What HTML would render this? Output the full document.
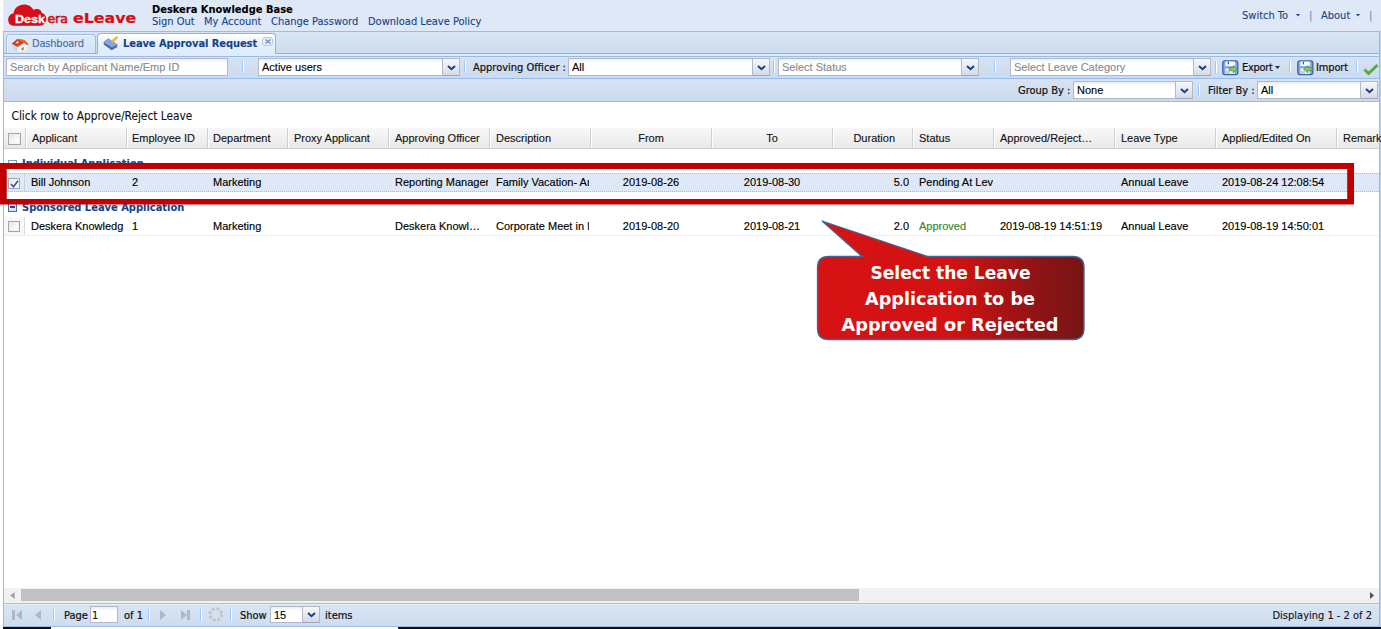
<!DOCTYPE html>
<html>
<head>
<meta charset="utf-8">
<title>Deskera eLeave</title>
<style>
html,body{margin:0;padding:0;}
body{width:1381px;height:629px;overflow:hidden;position:relative;background:#fff;
 font-family:"DejaVu Sans Condensed","DejaVu Sans","Liberation Sans",sans-serif;font-size:11px;color:#000;}
.abs{position:absolute;box-sizing:border-box;}
.t{position:absolute;white-space:nowrap;line-height:14px;}
.tah{font-family:"DejaVu Sans Condensed","DejaVu Sans","Liberation Sans",sans-serif;-webkit-text-stroke:0.1px;}
.ari{font-family:"Liberation Sans",sans-serif;-webkit-text-stroke:0.12px;}
.inp{position:absolute;box-sizing:border-box;background:#fff linear-gradient(#e9edf2,#fff 4px);border:1px solid #b5b8c8;}
.trig{position:absolute;box-sizing:border-box;background:linear-gradient(#f5f7fa 0%,#e8ecf2 45%,#d4dae5 100%);border:1px solid #b5b8c8;border-left:none;border-bottom-color:#9ea6b8;}
.sep{position:absolute;width:1px;background:#98c8ff;box-shadow:1px 0 0 #fff;}
.hsep{position:absolute;top:128px;width:1px;height:20px;background:#d0d0d0;box-shadow:1px 0 0 #fff;}
.cell{position:absolute;white-space:nowrap;overflow:hidden;font-family:"Liberation Sans",sans-serif;font-size:11px;line-height:14px;color:#000;-webkit-text-stroke:0.15px;}
svg{position:absolute;overflow:visible;}

</style>
</head>
<body>
<div class="abs" style="left:3px;top:0px;width:1378px;height:31px;background:#dfe8f6;"></div>
<div class="abs" style="left:3px;top:31px;width:1px;height:598px;background:#99bbe8;"></div>
<div class="abs" style="left:1379px;top:31px;width:2px;height:598px;background:linear-gradient(90deg,#99bbe8 50%,#bcd2ef 50%);"></div>
<svg style="left:8px;top:4px" width="40" height="23" viewBox="0 0 40 23">
<path d="M5.2 21.7 C1.8 21.7 0.2 18.6 0.2 15.8 C0.2 12.4 2.6 9.6 5.7 9.2 C5.9 4.2 10.8 0.6 16 0.6 C20.2 0.6 23.8 2.8 25.5 6 C26.6 5.1 28.2 4.8 29.6 4.9 C32.2 5.2 33.8 7 33.8 9 C36.6 9.8 38.3 12 38.3 14.8 C38.3 18.8 35.6 21.7 32 21.7 Z" fill="#d90d17"/>
<text x="7" y="19" font-family="Liberation Sans, sans-serif" font-weight="bold" font-size="11.8" fill="#fff" stroke="#fff" stroke-width="0.3" textLength="30" lengthAdjust="spacingAndGlyphs">Desk</text>
</svg>
<div class="t ari" style="left:47.5px;top:11px;font-size:12.5px;color:#d90d17;line-height:16px;font-family:'DejaVu Sans',sans-serif;-webkit-text-stroke:0.6px #d90d17;letter-spacing:-0.1px;">era</div>
<div class="t ari" style="left:73px;top:8.5px;font-size:14.5px;color:#d90d17;font-weight:bold;line-height:19px;font-family:'DejaVu Sans',sans-serif;transform-origin:0 0;transform:scaleX(1.09);-webkit-text-stroke:0.2px #d90d17;">eLeave</div>
<div class="t tah" style="left:152px;top:3px;font-size:11px;color:#000;font-weight:bold;">Deskera Knowledge Base</div>
<div class="t tah" style="left:152px;top:15px;font-size:11px;color:#15428b;">Sign Out</div>
<div class="t tah" style="left:204px;top:15px;font-size:11px;color:#15428b;">My Account</div>
<div class="t tah" style="left:271px;top:15px;font-size:11px;color:#15428b;">Change Password</div>
<div class="t tah" style="left:368px;top:15px;font-size:11px;color:#15428b;">Download Leave Policy</div>
<div class="t tah" style="left:1242px;top:9px;font-size:11px;color:#15428b;">Switch To</div>
<div class="t tah" style="left:1321px;top:9px;font-size:11px;color:#15428b;">About</div>
<div class="t tah" style="left:1309px;top:9px;font-size:11px;color:#6a8cc0;">|</div>
<div class="t tah" style="left:1369px;top:9px;font-size:11px;color:#6a8cc0;">|</div>
<svg style="left:1295.5px;top:14px" width="4" height="3"><path d="M0 0H4L2 2.6Z" fill="#15428b"/></svg>
<svg style="left:1355.5px;top:14px" width="4" height="3"><path d="M0 0H4L2 2.6Z" fill="#15428b"/></svg>
<div class="abs" style="left:4px;top:31px;width:1375px;height:22px;background:linear-gradient(#d9e5f4,#ccdcf0);border-top:1px solid #99bbe8;"></div>
<div class="abs" style="left:4px;top:53px;width:1375px;height:1px;background:#8db2e3;"></div>
<div class="abs" style="left:4px;top:54px;width:1375px;height:2px;background:#deecfd;"></div>
<div class="abs" style="left:4px;top:56px;width:1375px;height:1px;background:#99bbe8;"></div>
<div class="abs" style="left:6px;top:34px;width:90px;height:19px;background:linear-gradient(#dfebfb,#d3e3f8);border:1px solid #9dbce6;border-bottom:none;border-radius:4px 4px 0 0;box-shadow:inset 1px 1px 0 #eef5fd;"></div>
<div class="t tah" style="left:32px;top:37px;font-size:11px;color:#416aa3;letter-spacing:-0.2px;">Dashboard</div>
<div class="abs" style="left:97px;top:33px;width:179px;height:21px;background:linear-gradient(#ffffff,#e4eefb 60%,#deecfd);border:1px solid #8db2e3;border-bottom:none;border-radius:4px 4px 0 0;"></div>
<div class="t tah" style="left:123px;top:37px;font-size:11px;color:#15428b;font-weight:bold;letter-spacing:-0.07px;">Leave Approval Request</div>
<div class="abs" style="left:262px;top:37px;width:11px;height:9px;background:#e9f1fc;border:1px solid #b4c8e2;border-radius:3px;"></div>
<svg style="left:264.5px;top:39px" width="6" height="5"><path d="M0.5 0.5L5.5 4.5M5.5 0.5L0.5 4.5" stroke="#6d8fc0" stroke-width="1.5"/></svg>
<svg style="left:11px;top:38.4px" width="18.4" height="15.4" viewBox="0 0 18 15">
<path d="M1.7 6.7L6.4 9.2V13.5L2.4 11Z" fill="#c3d5ee"/>
<path d="M6.4 9.2L12.9 4.8L16.2 7.4V11L10 13.9L6.4 13.5Z" fill="#eef3fb"/>
<path d="M0.6 5.6L6 0.9L12.9 1.9L16.9 5.6L15.8 7L12.9 4.5L6.4 8.8Z" fill="#d8431b"/>
<path d="M6 0.9L12.9 1.9L16.9 5.6L15.8 7L12.9 4.5Z" fill="#e9692c"/>
<path d="M10.4 9.9L12.5 8.5V11.4L10.4 12.1Z" fill="#c47a17"/>
<rect x="5.3" y="3.4" width="1.9" height="1.8" fill="#f3f6fb"/>
</svg>
<svg style="left:103px;top:35px" width="17" height="16" viewBox="0 0 17 16">
<path d="M0.6 7.2L5.2 3.6L14.4 9.6L14 12.2L8.6 15.2L0.8 9.6Z" fill="#4a69b0"/>
<path d="M0.6 7.2L5.2 3.6L14.4 9.6L9 12.6Z" fill="#86a4e0"/>
<path d="M8 6.2L13.6 1L15.2 2.6L10 7.8Z" fill="#f2b21f"/>
</svg>
<div class="abs" style="left:4px;top:57px;width:1375px;height:22px;background:linear-gradient(#d6e3f3,#cbdaee);"></div>
<div class="abs" style="left:4px;top:78px;width:1375px;height:1px;background:#99bbe8;"></div>
<div class="inp" style="left:6px;top:58px;width:222px;height:18px;"></div>
<div class="t ari" style="left:10px;top:60px;font-size:11px;color:#8a8a8a;">Search by Applicant Name/Emp ID</div>
<div class="sep" style="left:242px;top:61px;height:12px;"></div>
<div class="inp" style="left:258px;top:58px;width:185px;height:18px;"></div>
<div class="trig" style="left:443px;top:58px;width:17px;height:18px;"></div>
<svg style="left:447px;top:65px" width="9" height="6"><path d="M1 1L4.5 4.2L8 1" stroke="#1c3f84" stroke-width="2" fill="none"/></svg>
<div class="t ari" style="left:262px;top:60px;font-size:11px;color:#000;">Active users</div>
<div class="sep" style="left:464px;top:61px;height:12px;"></div>
<div class="t tah" style="left:473px;top:61px;font-size:11px;color:#111;-webkit-text-stroke:0.22px #111;">Approving Officer :</div>
<div class="inp" style="left:568px;top:58px;width:185px;height:18px;"></div>
<div class="trig" style="left:753px;top:58px;width:17px;height:18px;"></div>
<svg style="left:757px;top:65px" width="9" height="6"><path d="M1 1L4.5 4.2L8 1" stroke="#1c3f84" stroke-width="2" fill="none"/></svg>
<div class="t ari" style="left:572px;top:60px;font-size:11px;color:#000;">All</div>
<div class="sep" style="left:773px;top:61px;height:12px;"></div>
<div class="inp" style="left:778px;top:58px;width:184px;height:18px;"></div>
<div class="trig" style="left:962px;top:58px;width:17px;height:18px;"></div>
<svg style="left:966px;top:65px" width="9" height="6"><path d="M1 1L4.5 4.2L8 1" stroke="#1c3f84" stroke-width="2" fill="none"/></svg>
<div class="t ari" style="left:782px;top:60px;font-size:11px;color:#8a8a8a;">Select Status</div>
<div class="sep" style="left:994px;top:61px;height:12px;"></div>
<div class="inp" style="left:1010px;top:58px;width:184px;height:18px;"></div>
<div class="trig" style="left:1194px;top:58px;width:17px;height:18px;"></div>
<svg style="left:1198px;top:65px" width="9" height="6"><path d="M1 1L4.5 4.2L8 1" stroke="#1c3f84" stroke-width="2" fill="none"/></svg>
<div class="t ari" style="left:1014px;top:60px;font-size:11px;color:#8a8a8a;">Select Leave Category</div>
<div class="sep" style="left:1215px;top:61px;height:12px;"></div>
<svg style="left:1222px;top:60px" width="17" height="16" viewBox="0 0 17 16">
<rect x="0.8" y="0.8" width="15" height="13.8" rx="2" fill="#86a9e6" stroke="#3b62b3" stroke-width="1.3"/>
<rect x="3.4" y="1.5" width="9.4" height="4.6" fill="#fff"/>
<rect x="5.6" y="1.8" width="1.4" height="2.6" fill="#3b62b3"/>
<rect x="3.4" y="8.4" width="9.4" height="5.4" fill="#eef2f8"/>
<rect x="3.4" y="10.8" width="4.4" height="3" fill="#b9dba6"/>
<path d="M7.1 7.7H11.3V5.7L15.5 9.2L11.3 12.7V10.7H7.1Z" fill="#86c872" stroke="#3f8f2f" stroke-width="0.7"/>
</svg>
<div class="t tah" style="left:1242px;top:61px;font-size:11px;color:#111;letter-spacing:-0.3px;-webkit-text-stroke:0.22px #111;">Export</div>
<svg style="left:1275px;top:66px" width="5" height="3"><path d="M0 0H5L2.5 3Z" fill="#1d2d4d"/></svg>
<div class="sep" style="left:1289px;top:61px;height:12px;"></div>
<svg style="left:1297px;top:60px" width="17" height="16" viewBox="0 0 17 16">
<rect x="0.8" y="0.8" width="15" height="13.8" rx="2" fill="#86a9e6" stroke="#3b62b3" stroke-width="1.3"/>
<rect x="3.4" y="1.5" width="9.4" height="4.6" fill="#fff"/>
<rect x="5.6" y="1.8" width="1.4" height="2.6" fill="#3b62b3"/>
<rect x="3.4" y="8.4" width="9.4" height="5.4" fill="#eef2f8"/>
<rect x="3.4" y="10.8" width="4.4" height="3" fill="#b9dba6"/>
<path d="M15.1 7.7H10.8V5.7L6.6 9.2L10.8 12.7V10.7H15.1Z" fill="#86c872" stroke="#3f8f2f" stroke-width="0.7"/>
</svg>
<div class="t tah" style="left:1316px;top:61px;font-size:11px;color:#111;letter-spacing:-0.15px;-webkit-text-stroke:0.22px #111;">Import</div>
<div class="sep" style="left:1356px;top:61px;height:12px;"></div>
<svg style="left:1363px;top:63px" width="16" height="13" viewBox="0 0 16 13"><path d="M1.5 6.5L5.5 10.5L14.5 2" stroke="#55ad42" stroke-width="3" fill="none"/></svg>
<div class="abs" style="left:4px;top:79px;width:1375px;height:22px;background:linear-gradient(#d6e3f3,#cbdaee);"></div>
<div class="abs" style="left:4px;top:101px;width:1375px;height:1px;background:#99bbe8;"></div>
<div class="t tah" style="left:1018px;top:84px;font-size:11px;color:#111;-webkit-text-stroke:0.22px #111;">Group By :</div>
<div class="inp" style="left:1073px;top:81px;width:103px;height:18px;"></div>
<div class="trig" style="left:1176px;top:81px;width:17px;height:18px;"></div>
<svg style="left:1180px;top:88px" width="9" height="6"><path d="M1 1L4.5 4.2L8 1" stroke="#1c3f84" stroke-width="2" fill="none"/></svg>
<div class="t ari" style="left:1077px;top:83px;font-size:11px;color:#000;">None</div>
<div class="sep" style="left:1198px;top:84px;height:12px;"></div>
<div class="t tah" style="left:1208px;top:84px;font-size:11px;color:#111;-webkit-text-stroke:0.22px #111;">Filter By :</div>
<div class="inp" style="left:1257px;top:81px;width:104px;height:18px;"></div>
<div class="trig" style="left:1361px;top:81px;width:17px;height:18px;"></div>
<svg style="left:1365px;top:88px" width="9" height="6"><path d="M1 1L4.5 4.2L8 1" stroke="#1c3f84" stroke-width="2" fill="none"/></svg>
<div class="t ari" style="left:1261px;top:83px;font-size:11px;color:#000;">All</div>
<div class="t tah" style="left:11.5px;top:109px;font-size:11.8px;color:#111;">Click row to Approve/Reject Leave</div>
<div class="abs" style="left:4px;top:128px;width:1375px;height:21px;background:linear-gradient(#f8f8f8,#f0f0f1 55%,#e8e8ea);border-bottom:1px solid #d0d0d0;"></div>
<div class="hsep" style="left:25px;"></div>
<div class="hsep" style="left:126px;"></div>
<div class="hsep" style="left:207px;"></div>
<div class="hsep" style="left:287px;"></div>
<div class="hsep" style="left:388px;"></div>
<div class="hsep" style="left:489px;"></div>
<div class="hsep" style="left:590px;"></div>
<div class="hsep" style="left:711px;"></div>
<div class="hsep" style="left:832px;"></div>
<div class="hsep" style="left:912px;"></div>
<div class="hsep" style="left:993px;"></div>
<div class="hsep" style="left:1114px;"></div>
<div class="hsep" style="left:1215px;"></div>
<div class="hsep" style="left:1336px;"></div>
<div class="t ari" style="left:32px;top:131px;font-size:11px;color:#111;">Applicant</div>
<div class="t ari" style="left:132px;top:131px;font-size:11px;color:#111;">Employee ID</div>
<div class="t ari" style="left:213px;top:131px;font-size:11px;color:#111;">Department</div>
<div class="t ari" style="left:294px;top:131px;font-size:11px;color:#111;">Proxy Applicant</div>
<div class="t ari" style="left:395px;top:131px;font-size:11px;color:#111;">Approving Officer</div>
<div class="t ari" style="left:496px;top:131px;font-size:11px;color:#111;">Description</div>
<div class="t ari" style="left:591px;top:131px;font-size:11px;color:#111;width:120px;text-align:center;">From</div>
<div class="t ari" style="left:712px;top:131px;font-size:11px;color:#111;width:120px;text-align:center;">To</div>
<div class="t ari" style="left:815px;top:131px;font-size:11px;color:#111;width:80px;text-align:right;">Duration</div>
<div class="t ari" style="left:919px;top:131px;font-size:11px;color:#111;">Status</div>
<div class="t ari" style="left:1000px;top:131px;font-size:11px;color:#111;">Approved/Reject…</div>
<div class="t ari" style="left:1121px;top:131px;font-size:11px;color:#111;">Leave Type</div>
<div class="t ari" style="left:1222px;top:131px;font-size:11px;color:#111;">Applied/Edited On</div>
<div class="t ari" style="left:1343px;top:131px;font-size:11px;color:#111;">Remark</div>
<div class="abs" style="left:8px;top:133px;width:13px;height:12px;border:1px solid #a2a5ab;background:linear-gradient(135deg,#e2e3e6,#fbfbfb 70%);box-shadow:inset 0 0 0 1px #f1f1f1;"></div>
<div class="t tah" style="left:22px;top:157px;font-size:11px;color:#15428b;font-weight:bold;">Individual Application</div>
<div class="abs" style="left:8px;top:160px;width:9px;height:9px;background:#fff;border:1px solid #7f9db9;"></div>
<div class="abs" style="left:10px;top:164px;width:5px;height:1px;background:#333;"></div>
<div class="abs" style="left:4px;top:173px;width:1375px;height:19px;background:#dfe8f6;border-top:1px dotted #a3bae9;border-bottom:1px dotted #a3bae9;"></div>
<div class="abs" style="left:24px;top:174px;width:1px;height:17px;background:#c5d2e8;"></div>
<div class="abs" style="left:8px;top:178px;width:12px;height:11px;border:1px solid #a2a5ab;background:linear-gradient(135deg,#e2e3e6,#fbfbfb 70%);box-shadow:inset 0 0 0 1px #f1f1f1;"></div>
<svg style="left:10px;top:179.5px" width="9" height="8"><path d="M1 4L3.5 6.8L8 0.8" stroke="#3a4fa0" stroke-width="1.6" fill="none"/></svg>
<div class="cell" style="left:31px;top:175px;width:93px;">Bill Johnson</div>
<div class="cell" style="left:132px;top:175px;width:74px;">2</div>
<div class="cell" style="left:213px;top:175px;width:74px;">Marketing</div>
<div class="cell" style="left:294px;top:175px;width:94px;"></div>
<div class="cell" style="left:395px;top:175px;width:93px;">Reporting Manager</div>
<div class="cell" style="left:496px;top:175px;width:93px;">Family Vacation- Ar</div>
<div class="cell" style="left:591px;top:175px;width:120px;text-align:center;">2019-08-26</div>
<div class="cell" style="left:712px;top:175px;width:120px;text-align:center;">2019-08-30</div>
<div class="cell" style="left:833px;top:175px;width:76px;text-align:right;">5.0</div>
<div class="cell" style="left:919px;top:175px;width:74px;color:#000;">Pending At Lev</div>
<div class="cell" style="left:1000px;top:175px;width:114px;"></div>
<div class="cell" style="left:1121px;top:175px;width:94px;">Annual Leave</div>
<div class="cell" style="left:1222px;top:175px;width:114px;">2019-08-24 12:08:54</div>
<div class="t tah" style="left:22px;top:201px;font-size:11px;color:#15428b;font-weight:bold;">Sponsored Leave Application</div>
<div class="abs" style="left:8px;top:203px;width:9px;height:9px;background:#dbe5f5;border:1px solid #4d6ea8;"></div>
<div class="abs" style="left:10px;top:206px;width:5px;height:2px;background:#2a4580;"></div>
<div class="abs" style="left:4px;top:235px;width:1375px;height:1px;background:#ededed;"></div>
<div class="abs" style="left:4px;top:217px;width:20px;height:18px;background:#f7f7f7;"></div>
<div class="abs" style="left:24px;top:217px;width:1px;height:18px;background:#dcdcdc;"></div>
<div class="abs" style="left:8px;top:221px;width:12px;height:11px;border:1px solid #a2a5ab;background:linear-gradient(135deg,#e2e3e6,#fbfbfb 70%);box-shadow:inset 0 0 0 1px #f1f1f1;"></div>
<div class="cell" style="left:31px;top:219px;width:93px;">Deskera Knowledg</div>
<div class="cell" style="left:132px;top:219px;width:74px;">1</div>
<div class="cell" style="left:213px;top:219px;width:74px;">Marketing</div>
<div class="cell" style="left:294px;top:219px;width:94px;"></div>
<div class="cell" style="left:395px;top:219px;width:93px;">Deskera Knowl…</div>
<div class="cell" style="left:496px;top:219px;width:93px;">Corporate Meet in I</div>
<div class="cell" style="left:591px;top:219px;width:120px;text-align:center;">2019-08-20</div>
<div class="cell" style="left:712px;top:219px;width:120px;text-align:center;">2019-08-21</div>
<div class="cell" style="left:833px;top:219px;width:76px;text-align:right;">2.0</div>
<div class="cell" style="left:919px;top:219px;width:74px;color:#33862a;">Approved</div>
<div class="cell" style="left:1000px;top:219px;width:114px;">2019-08-19 14:51:19</div>
<div class="cell" style="left:1121px;top:219px;width:94px;">Annual Leave</div>
<div class="cell" style="left:1222px;top:219px;width:114px;">2019-08-19 14:50:01</div>
<svg style="left:0;top:160px" width="1360" height="50" viewBox="0 160 1360 50"><path fill-rule="evenodd" fill="#c00000" d="M0 163H1354V204.5H0Z M6.7 169.1H1347.2V199.1H6.7Z"/></svg>
<svg style="left:800px;top:215px" width="300" height="135" viewBox="800 215 300 135">
<defs><linearGradient id="cg" x1="0" y1="0" x2="1" y2="0"><stop offset="0" stop-color="#d71213"/><stop offset="0.5" stop-color="#d31213"/><stop offset="0.82" stop-color="#8f1415"/><stop offset="1" stop-color="#761516"/></linearGradient></defs>
<path d="M828.5 256.5 H862 L822 221 L928 256.5 H1073 Q1084 256.5 1084 267.5 V328.5 Q1084 339.5 1073 339.5 H828.5 Q817.5 339.5 817.5 328.5 V267.5 Q817.5 256.5 828.5 256.5 Z" fill="url(#cg)" stroke="#3b6a9e" stroke-width="1.3"/>
<text x="950.5" y="279" text-anchor="middle" font-family="DejaVu Sans Condensed, DejaVu Sans, sans-serif" font-weight="bold" font-size="17" fill="#fff" textLength="160" lengthAdjust="spacingAndGlyphs">Select the Leave</text>
<text x="950" y="304.5" text-anchor="middle" font-family="DejaVu Sans Condensed, DejaVu Sans, sans-serif" font-weight="bold" font-size="17" fill="#fff" textLength="170" lengthAdjust="spacingAndGlyphs">Application to be</text>
<text x="950" y="330.5" text-anchor="middle" font-family="DejaVu Sans Condensed, DejaVu Sans, sans-serif" font-weight="bold" font-size="17" fill="#fff" textLength="217" lengthAdjust="spacingAndGlyphs">Approved or Rejected</text>
</svg>
<div class="abs" style="left:4px;top:588px;width:1375px;height:15px;background:#f1f1f1;"></div>
<div class="abs" style="left:21px;top:589px;width:838px;height:12px;background:#c1c1c1;"></div>
<svg style="left:10px;top:591.5px" width="5" height="7"><path d="M4.7 0V7L0 3.5Z" fill="#a3a3a3"/></svg>
<svg style="left:1370px;top:592px" width="4" height="7"><path d="M0 0V7L4 3.5Z" fill="#505050"/></svg>
<div class="abs" style="left:4px;top:603px;width:1375px;height:24px;background:linear-gradient(#d9e5f4,#cddcef);border-top:1px solid #a3c0ea;border-bottom:1px solid #99bbe8;box-shadow:inset 0 1px 0 #e6eef9;"></div>
<svg style="left:16px;top:609.5px" width="6" height="10"><path d="M6 0V10L0 5Z" fill="#b0b8c5"/></svg>
<div class="abs" style="left:12.3px;top:609.5px;width:2.5px;height:10px;background:#b0b8c5;"></div>
<svg style="left:35px;top:609.5px" width="6" height="10"><path d="M6 0V10L0 5Z" fill="#b0b8c5"/></svg>
<div class="sep" style="left:53px;top:609px;height:12px;"></div>
<div class="t tah" style="left:64px;top:609px;font-size:11px;color:#111;-webkit-text-stroke:0.22px #111;">Page</div>
<div class="inp" style="left:90px;top:606px;width:28px;height:17px;"></div>
<div class="t tah" style="left:92px;top:609px;font-size:11px;color:#111;">1</div>
<div class="t tah" style="left:124px;top:609px;font-size:11px;color:#111;-webkit-text-stroke:0.22px #111;">of 1</div>
<div class="sep" style="left:148px;top:609px;height:12px;"></div>
<svg style="left:160px;top:609.5px" width="6" height="10"><path d="M0 0V10L6 5Z" fill="#b0b8c5"/></svg>
<svg style="left:181px;top:609.5px" width="6" height="10"><path d="M0 0V10L6 5Z" fill="#b0b8c5"/></svg>
<div class="abs" style="left:187.3px;top:609.5px;width:2.5px;height:10px;background:#b0b8c5;"></div>
<div class="sep" style="left:200px;top:609px;height:12px;"></div>
<svg style="left:207px;top:606px" width="18" height="17" viewBox="0 0 18 17"><circle cx="8.8" cy="8.4" r="5.8" fill="none" stroke="#c6c1bd" stroke-width="3" stroke-dasharray="2.75 1.8"/></svg>
<div class="sep" style="left:230px;top:609px;height:12px;"></div>
<div class="t tah" style="left:240px;top:609px;font-size:11px;color:#111;-webkit-text-stroke:0.22px #111;">Show</div>
<div class="inp" style="left:270px;top:606px;width:33px;height:17px;"></div>
<div class="trig" style="left:303px;top:606px;width:17px;height:17px;"></div>
<svg style="left:307px;top:612px" width="9" height="6"><path d="M1 1L4.5 4.2L8 1" stroke="#1c3f84" stroke-width="2" fill="none"/></svg>
<div class="t ari" style="left:274px;top:608px;font-size:11px;color:#000;">15</div>
<div class="t tah" style="left:325px;top:609px;font-size:11px;color:#111;-webkit-text-stroke:0.22px #111;">items</div>
<div class="t tah" style="left:1173px;top:609px;font-size:11px;color:#111;width:199px;text-align:right;">Displaying 1 - 2 of 2</div>
<div class="abs" style="left:0px;top:627px;width:1381px;height:2px;background:#fff;"></div>
<div class="abs" style="left:3px;top:627px;width:48px;height:2px;background:#0b0b0d;"></div>
<div class="abs" style="left:398px;top:627px;width:983px;height:2px;background:#0b0b0d;"></div>
</body>
</html>
